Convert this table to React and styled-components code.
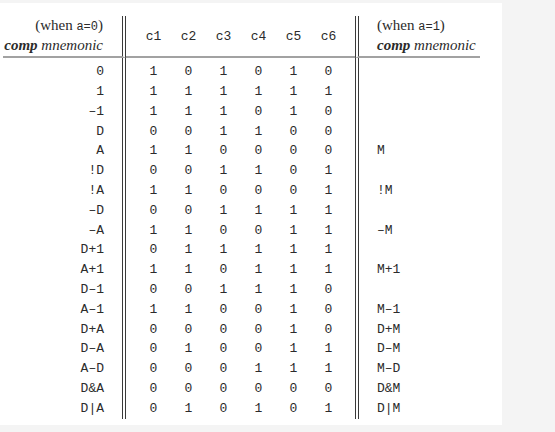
import React from 'react'
import styled, { createGlobalStyle } from 'styled-components'

const GlobalStyle = createGlobalStyle`
  html, body {
    margin: 0;
    padding: 0;
    background: #f4f4f4;
  }
`

const Page = styled.div`
  width: 555px;
  height: 432px;
  padding-top: 3px;
  box-sizing: border-box;
`

const Panel = styled.div`
  width: 502px;
  height: 422px;
  background: #fff;
  padding: 13px 0 0 3px;
  box-sizing: border-box;
`

const Table = styled.table`
  border-collapse: separate;
  border-spacing: 0;
  color: #2b2b2b;
  font-family: "Liberation Mono", "Courier New", monospace;
  font-size: 13px;
`

const Head = styled.th`
  height: 40px;
  padding: 0;
  font-weight: normal;
  border-bottom: 2px solid #a2a2a2;
  vertical-align: middle;
  white-space: nowrap;
`

const Caption = styled(Head)`
  font-family: "Liberation Serif", "Times New Roman", serif;
  font-size: 15px;
  line-height: 18px;
  text-align: ${({ $align }) => $align};
  width: ${({ $w }) => $w}px;
  padding-left: ${({ $align }) => ($align === 'left' ? '18px' : '0')};
  padding-right: ${({ $align }) => ($align === 'right' ? '19px' : '0')};
  border-right: ${({ $divider }) => ($divider ? '4px double #3a3a3a' : 'none')};
  border-left: ${({ $leftDivider }) => ($leftDivider ? '4px double #3a3a3a' : 'none')};
  padding-bottom: 2px;
  box-sizing: border-box;
`

const Mono = styled.span`
  font-family: "Liberation Mono", "Courier New", monospace;
  font-size: 12px;
`

const Em = styled.i`
  display: block;
`

const Strong = styled.b`
  font-weight: bold;
`

const CodeHead = styled(Head)`
  width: 35px;
  text-align: center;
  padding-left: ${({ $first }) => ($first ? '10px' : '0')};
  padding-right: ${({ $last }) => ($last ? '9px' : '0')};
`

const Cell = styled.td`
  height: ${({ $top }) => ($top ? '24px' : '19.8px')};
  padding: 0;
  padding-top: ${({ $top }) => ($top ? '4px' : '0')};
  line-height: 19.8px;
  box-sizing: border-box;
  vertical-align: ${({ $top }) => ($top ? 'bottom' : 'middle')};
  white-space: nowrap;
`

const Mnemonic = styled(Cell)`
  text-align: ${({ $align }) => $align};
  padding-right: ${({ $align }) => ($align === 'right' ? '18px' : '0')};
  padding-left: ${({ $align }) => ($align === 'left' ? '18px' : '0')};
  border-right: ${({ $divider }) => ($divider ? '4px double #3a3a3a' : 'none')};
  border-left: ${({ $leftDivider }) => ($leftDivider ? '4px double #3a3a3a' : 'none')};
`

const Bit = styled(Cell)`
  text-align: center;
  padding-left: ${({ $first }) => ($first ? '10px' : '0')};
  padding-right: ${({ $last }) => ($last ? '9px' : '0')};
`

const rows = [
  ['0', '101010', ''],
  ['1', '111111', ''],
  ['-1', '111010', ''],
  ['D', '001100', ''],
  ['A', '110000', 'M'],
  ['!D', '001101', ''],
  ['!A', '110001', '!M'],
  ['-D', '001111', ''],
  ['-A', '110011', '-M'],
  ['D+1', '011111', ''],
  ['A+1', '110111', 'M+1'],
  ['D-1', '001110', ''],
  ['A-1', '110010', 'M-1'],
  ['D+A', '000010', 'D+M'],
  ['D-A', '010011', 'D-M'],
  ['A-D', '000111', 'M-D'],
  ['D&A', '000000', 'D&M'],
  ['D|A', '010101', 'D|M'],
]

// minus signs in the source are en-dash-like hyphens
const show = (s) => s.replace(/-/g, '\u2013')

export default function App() {
  return (
    <Page>
      <GlobalStyle />
      <Panel>
        <Table>
          <thead>
            <tr>
              <Caption $align="right" $w={123} $divider>
                (when <Mono>a=0</Mono>)
                <Em><Strong>comp</Strong> mnemonic</Em>
              </Caption>
              {[1, 2, 3, 4, 5, 6].map((n) => (
                <CodeHead key={n} $first={n === 1} $last={n === 6}>
                  c{n}
                </CodeHead>
              ))}
              <Caption $align="left" $w={125} $leftDivider>
                (when <Mono>a=1</Mono>)
                <Em><Strong>comp</Strong> mnemonic</Em>
              </Caption>
            </tr>
          </thead>
          <tbody>
            {rows.map(([a0, bits, a1], i) => (
              <tr key={a0}>
                <Mnemonic $align="right" $divider $top={i === 0}>
                  {show(a0)}
                </Mnemonic>
                {bits.split('').map((b, j) => (
                  <Bit key={j} $first={j === 0} $last={j === 5} $top={i === 0}>
                    {b}
                  </Bit>
                ))}
                <Mnemonic $align="left" $leftDivider $top={i === 0}>
                  {show(a1)}
                </Mnemonic>
              </tr>
            ))}
          </tbody>
        </Table>
      </Panel>
    </Page>
  )
}
